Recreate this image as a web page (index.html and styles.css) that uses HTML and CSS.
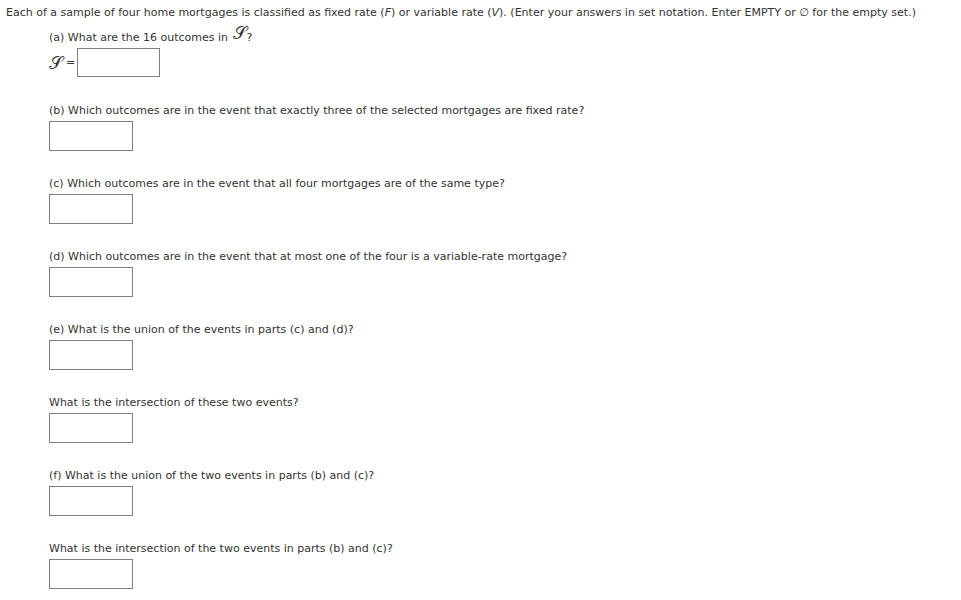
FILE: index.html
```html
<!DOCTYPE html>
<html>
<head>
<meta charset="utf-8">
<link rel="stylesheet" href="styles.css">
</head>
<body>
<p class="intro">Each of a sample of four home mortgages is classified as fixed rate (<i>F</i>) or variable rate (<i>V</i>). (Enter your answers in set notation. Enter EMPTY or &#8709; for the empty set.)</p>
<div class="parts">
  <div class="part part-a">
    <p class="q">(a) What are the 16 outcomes in <span class="script script-q">𝒮</span>?</p>
    <div class="answer-row">
      <span class="script script-a">𝒮</span><span class="eq">=</span><span class="box box-a"></span>
    </div>
  </div>
  <div class="part">
    <p class="q">(b) Which outcomes are in the event that exactly three of the selected mortgages are fixed rate?</p>
    <span class="box"></span>
  </div>
  <div class="part">
    <p class="q">(c) Which outcomes are in the event that all four mortgages are of the same type?</p>
    <span class="box"></span>
  </div>
  <div class="part">
    <p class="q">(d) Which outcomes are in the event that at most one of the four is a variable-rate mortgage?</p>
    <span class="box"></span>
  </div>
  <div class="part">
    <p class="q">(e) What is the union of the events in parts (c) and (d)?</p>
    <span class="box"></span>
  </div>
  <div class="part">
    <p class="q">What is the intersection of these two events?</p>
    <span class="box"></span>
  </div>
  <div class="part">
    <p class="q">(f) What is the union of the two events in parts (b) and (c)?</p>
    <span class="box"></span>
  </div>
  <div class="part">
    <p class="q">What is the intersection of the two events in parts (b) and (c)?</p>
    <span class="box"></span>
  </div>
</div>
</body>
</html>
```
FILE: styles.css
```css
html, body {
  margin: 0;
  padding: 0;
  background: #fff;
}
body {
  font-family: "DejaVu Sans", Verdana, sans-serif;
  font-size: 11px;
  color: #333;
  padding: 6px 0 0 6px;
  overflow: hidden;
  height: 594px;
}
p {
  margin: 0;
  line-height: 13px;
}
.intro {
  height: 13px;
}
.parts {
  padding-left: 43px;
  display: flex;
  flex-direction: column;
}
.part {
  display: flex;
  flex-direction: column;
  align-items: flex-start;
  height: 73px;
  box-sizing: border-box;
}
.part-a {
  height: 85px;
  padding-top: 12px;
}
.q {
  height: 13px;
  margin-bottom: 4px;
}
.part-a .q {
  margin-bottom: 4px;
}
.script {
  font-family: "DejaVu Serif", "Noto Sans", serif;
  font-size: 18px;
  line-height: 0;
}
.script-q {
  vertical-align: 2px;
  margin-left: 1px;
}
.answer-row {
  display: flex;
  align-items: center;
  height: 29px;
}
.script-a {
  width: 15px;
  line-height: 13px;
}
.eq {
  margin: 0 4px 0 2px;
  width: 7px;
}
.box {
  display: block;
  box-sizing: border-box;
  width: 84px;
  height: 30px;
  border: 1px solid #808080;
  background: #fff;
}
.box-a {
  width: 83px;
  height: 29px;
}
```
